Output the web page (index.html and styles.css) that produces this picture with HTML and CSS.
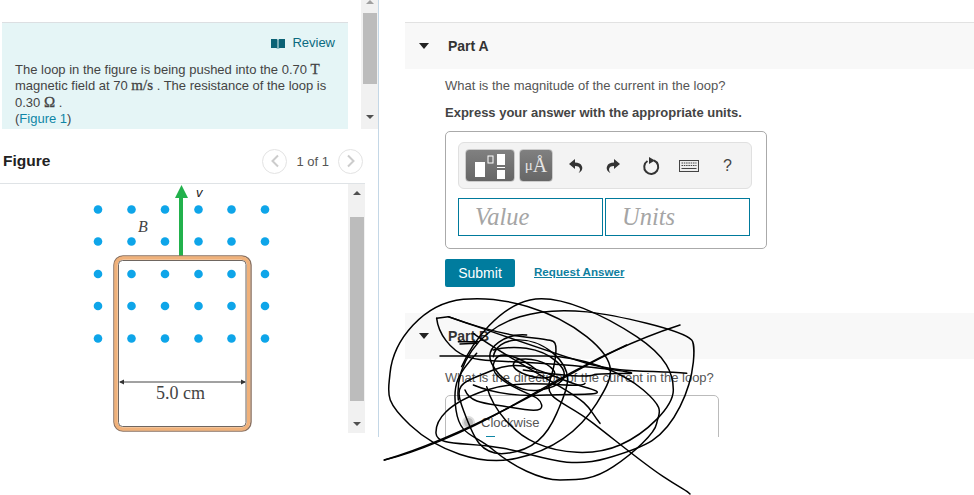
FILE: index.html
```html
<!DOCTYPE html>
<html lang="en">
<head>
<meta charset="UTF-8">
<meta name="viewport" content="width=device-width, initial-scale=1.0">
<title>Part A</title>
<link rel="stylesheet" href="styles.css">
</head>
<body>

<div class="left-pane">
    <div class="problem-row">
        <div class="problem">
            <div class="review">
                <svg class="review-icon" width="16" height="11" viewBox="0 0 16 11"><path d="M1 1h5.500q1 0 1 1v9q-.5-1-1.500-1H1zM15 1H9.500q-1 0-1 1v9q.5-1 1.500-1H15z" fill="#0b6275"/></svg>
                <a class="review-link">Review</a>
            </div>
            <p>The loop in the figure is being pushed into the 0.70 <span class="math">T</span><br>
            magnetic field at 70 <span class="math">m/s</span> . The resistance of the loop is<br>
            0.30 <span class="math">Ω</span> .<br>
            (<a class="fig-link">Figure 1</a>)</p>
        </div>
        <div class="scrollbar top-scroll">
            <span class="arrow-up"></span>
            <span class="thumb"></span>
            <span class="arrow-down"></span>
        </div>
    </div>

    <div class="figure-head">
        <h2>Figure</h2>
        <div class="pager">
            <span class="circle"><svg width="10" height="14" viewBox="0 0 10 14"><path d="M8 1.500 2.500 7 8 12.500" fill="none" stroke="#ccc" stroke-width="2"/></svg></span>
            <span class="count">1 of 1</span>
            <span class="circle"><svg width="10" height="14" viewBox="0 0 10 14"><path d="M2 1.500 7.500 7 2 12.500" fill="none" stroke="#ccc" stroke-width="2"/></svg></span>
        </div>
    </div>

    <div class="figure-body">
        <svg class="figure-art" width="348" height="249" viewBox="0 184 348 249">
            <g fill="#0ea5e9">
                <circle cx="98" cy="209.500" r="4.300"/><circle cx="131.500" cy="209.500" r="4.300"/><circle cx="165" cy="209.500" r="4.300"/><circle cx="198.500" cy="209.500" r="4.300"/><circle cx="231.500" cy="209.500" r="4.300"/><circle cx="265" cy="209.500" r="4.300"/>
                <circle cx="98" cy="241.500" r="4.300"/><circle cx="131.500" cy="241.500" r="4.300"/><circle cx="165" cy="241.500" r="4.300"/><circle cx="198.500" cy="241.500" r="4.300"/><circle cx="231.500" cy="241.500" r="4.300"/><circle cx="265" cy="241.500" r="4.300"/>
                <circle cx="98" cy="274" r="4.300"/><circle cx="131.500" cy="274" r="4.300"/><circle cx="165" cy="274" r="4.300"/><circle cx="198.500" cy="274" r="4.300"/><circle cx="231.500" cy="274" r="4.300"/><circle cx="265" cy="274" r="4.300"/>
                <circle cx="98" cy="306" r="4.300"/><circle cx="131.500" cy="306" r="4.300"/><circle cx="165" cy="306" r="4.300"/><circle cx="198.500" cy="306" r="4.300"/><circle cx="231.500" cy="306" r="4.300"/><circle cx="265" cy="306" r="4.300"/>
                <circle cx="98" cy="338.500" r="4.300"/><circle cx="131.500" cy="338.500" r="4.300"/><circle cx="165" cy="338.500" r="4.300"/><circle cx="198.500" cy="338.500" r="4.300"/><circle cx="231.500" cy="338.500" r="4.300"/><circle cx="265" cy="338.500" r="4.300"/>
            </g>
            <rect x="179" y="196" width="4" height="60" fill="#22b14c"/>
            <path d="M181.500 185 188 198H175z" fill="#22b14c"/>
            <rect x="114" y="256" width="137" height="175" rx="9" fill="none" stroke="#8a7262" stroke-width="1.500"/>
            <rect x="116" y="258" width="132.500" height="171" rx="7" fill="none" stroke="#f0b17a" stroke-width="3.500"/>
            <rect x="118.500" y="260.500" width="127.500" height="166" rx="4" fill="none" stroke="#6f6660" stroke-width="1"/>
            <path d="M120 382H245" stroke="#444" stroke-width="1"/>
            <path d="M124 379.500 119 382l5 2.500zM241 379.500l5 2.500-5 2.500z" fill="#333"/>
            <text class="fig-v" x="196" y="197">v</text>
            <text class="fig-b" x="138" y="232">B</text>
            <text class="fig-size" x="180.500" y="399">5.0 cm</text>
        </svg>
        <div class="scrollbar figure-scroll">
            <span class="arrow-up"></span>
            <span class="thumb"></span>
            <span class="arrow-down"></span>
        </div>
    </div>
</div>

<div class="right-pane">
    <div class="part-head part-a">
        <span class="caret"></span>
        <h3>Part A</h3>
    </div>
    <div class="part-body">
        <p class="question">What is the magnitude of the current in the loop?</p>
        <p class="instructions">Express your answer with the appropriate units.</p>

        <div class="answer-box">
            <div class="toolbar">
                <span class="tool-btn tool-wide">
                    <svg width="32" height="26" viewBox="0 0 32 26">
                        <rect x="1" y="9" width="10" height="15" fill="#fff"/>
                        <rect x="14" y="3" width="5" height="7" fill="none" stroke="#fff"/>
                        <rect x="23" y="1" width="8" height="11" fill="#fff"/>
                        <rect x="23" y="14" width="8" height="1" fill="#fff"/>
                        <rect x="23" y="17" width="8" height="9" fill="#fff"/>
                    </svg>
                </span>
                <span class="tool-btn tool-unit">μ<span class="angstrom">Å</span></span>
                <svg class="tool-icon" width="15" height="16" viewBox="0 0 15 16"><path d="M7 1 1 6l6 5V8c3 0 5 1 5 3.500 0 1-.5 2.500-1.500 3.500C13.500 13.500 15 11 14 8.500 13 5.500 10.500 4.500 7 4.500z" fill="#333"/></svg>
                <svg class="tool-icon redo" width="15" height="16" viewBox="0 0 15 16"><path d="M8 1l6 5-6 5V8C5 8 3 9 3 11.500 3 12.500 3.500 14 4.500 15 1.500 13.500 0 11 1 8.500 2 5.500 4.500 4.500 8 4.500z" fill="#333"/></svg>
                <svg class="tool-icon reset" width="18" height="20" viewBox="0 0 18 20"><path d="M5.500 5a7 7 0 1 0 6.500-.5" fill="none" stroke="#333" stroke-width="2"/><path d="M7 1l6 3.500L7 8z" fill="#333"/></svg>
                <svg class="tool-icon keyboard" width="20" height="12" viewBox="0 0 20 12"><rect x=".5" y=".5" width="19" height="11" fill="#eee" stroke="#444"/><path d="M2.500 3h15M2.500 5.500h15" stroke="#444" stroke-dasharray="1.500 .8"/><path d="M2.500 8.500h15" stroke="#444"/></svg>
                <span class="help">?</span>
            </div>
            <div class="inputs">
                <div class="fake-input">Value</div>
                <div class="fake-input">Units</div>
            </div>
        </div>

        <div class="actions">
            <button class="submit">Submit</button>
            <a class="request">Request Answer</a>
        </div>
    </div>

    <div class="part-head part-b">
        <span class="caret"></span>
        <h3>Part B</h3>
    </div>
    <div class="part-body">
        <p class="question part-b-question">What is the direction of the current in the loop?</p>
        <div class="choice-box">
            <span class="radio"></span>
            <span class="choice-label">Clockwise</span>
            <span class="choice-mark"></span>
        </div>
    </div>
</div>

<!-- pen scribble drawn over the page -->
<svg class="scribble" width="350" height="205" viewBox="0 0 1050 615">
    <g fill="none" stroke="#000" stroke-width="4.500" stroke-linecap="round" stroke-linejoin="round">
        <path d="M30 250C40 150 130 40 250 28S520 60 620 140S700 260 650 340S520 480 410 505S170 480 90 405S25 310 30 250"/>
        <path d="M235 330C225 230 290 120 420 80S700 75 800 100S925 140 935 150S950 250 900 350S800 470 680 505S480 495 370 475S170 470 168 430S200 340 320 300S600 300 615 280"/>
        <path d="M245 230C280 150 360 50 450 30S680 80 770 140S880 250 880 300S800 430 720 465S540 490 470 460S340 360 320 290"/>
        <path d="M180 198L500 198C600 200 720 240 790 300S835 370 830 400S760 490 700 530S600 570 540 570S400 530 340 480S240 440 228 360S235 250 290 190"/>
        <path d="M170 85L205 80C260 100 350 130 430 140S520 150 525 160S530 210 510 270S550 330 640 400S790 520 850 560S920 600 930 612"/>
        <path d="M170 85C175 130 210 180 260 200S450 210 660 235S670 245 640 255S500 250 430 240"/>
        <path d="M340 200C350 140 450 130 520 190S560 300 530 370S460 480 380 490S280 440 250 360S240 280 340 240S500 260 610 290S590 310 500 315S340 310 280 285"/>
        <path d="M205 80C350 130 520 190 620 220S820 240 920 250"/>
        <path d="M13 510C100 490 250 430 400 345S620 220 740 165"/>
        <path d="M13 510C150 470 300 400 450 320S700 170 900 105"/>
        <path d="M235 155L295 155M240 162L290 160"/>
        <path d="M470 240C420 200 360 180 345 210S345 260 400 290S480 320 485 345S440 360 380 350S270 340 255 300"/>
        <path d="M340 180C400 165 480 170 530 215S540 290 480 300S360 270 335 220S380 130 440 135"/>
        <path d="M410 210C450 200 500 215 520 240S480 270 440 255S390 225 410 210"/>
        <path d="M280 130C340 175 440 230 540 290S620 350 660 400"/>
    </g>
</svg>

</body>
</html>
```

FILE: styles.css
```css
body {
    font-family: "Liberation Sans", Arial, sans-serif;
    background-color: #fff;
    color: #444;
    margin: 0;
    padding: 0;
    width: 974px;
    height: 495px;
    overflow: hidden;
    display: flex;
    align-items: flex-start;
    position: relative;
}

p, h2, h3 {
    margin: 0;
}

/* left column */
.left-pane {
    width: 378px;
    height: 437px;
    flex-shrink: 0;
    border-right: 1px solid #c4d7e6;
}

.problem-row {
    display: flex;
    align-items: flex-end;
    height: 129px;
}

.problem {
    width: 346px;
    height: 106px;
    margin-left: 2px;
    margin-right: 13px;
    background-color: #e5f5f6;
    border-top: 1px solid #dcdfe2;
    font-size: 13px;
    line-height: 16.400px;
    overflow: hidden;
}

.problem p {
    padding-left: 13px;
    margin-top: 11px;
    white-space: nowrap;
}

.review {
    display: flex;
    justify-content: flex-end;
    align-items: center;
    gap: 6px;
    padding: 12px 13px 0 0;
    height: 16px;
}

.review-link {
    color: #0b6a80;
}

.math {
    font-family: "Liberation Serif", serif;
    font-size: 15px;
    line-height: 0;
    -webkit-text-stroke: 0.3px #444;
    color: #444;
}

.fig-link {
    color: #0f86a6;
}

.scrollbar {
    width: 17px;
    background-color: #f1f1f1;
    display: flex;
    flex-direction: column;
    align-items: center;
    flex-shrink: 0;
}

.top-scroll {
    height: 129px;
}

.figure-scroll {
    height: 249px;
}

.thumb {
    display: block;
    width: 14px;
    background-color: #bcbcbc;
}

.top-scroll .thumb {
    height: 71px;
    margin-top: 9px;
}

.figure-scroll .thumb {
    height: 184px;
    margin-top: 22px;
}

.arrow-up, .arrow-down {
    display: block;
    width: 0;
    height: 0;
    border-left: 4px solid transparent;
    border-right: 4px solid transparent;
}

.arrow-up {
    border-bottom: 4px solid #505050;
    margin-top: 7px;
}

.top-scroll .arrow-up {
    margin-top: 0;
    border-bottom-color: #a0a0a0;
}

.arrow-down {
    border-top: 4px solid #505050;
    margin-top: 21px;
}

.top-scroll .arrow-down {
    margin-top: 31px;
}

.figure-head {
    width: 365px;
    height: 55px;
    box-sizing: border-box;
    border-bottom: 1px solid #dfe3e6;
    display: flex;
    align-items: center;
    justify-content: space-between;
    padding: 10px 2px 0 3px;
}

.figure-head h2 {
    font-size: 15.500px;
    color: #222;
}

.pager {
    display: flex;
    align-items: center;
    gap: 9px;
}

.circle {
    width: 23px;
    height: 23px;
    border: 1px solid #e3e3e3;
    border-radius: 50%;
    display: flex;
    align-items: center;
    justify-content: center;
}

.count {
    font-size: 13px;
    color: #555;
}

.figure-body {
    display: flex;
    width: 365px;
}

.figure-art {
    display: block;
    flex-shrink: 0;
}

.fig-v {
    font-family: "Liberation Sans", sans-serif;
    font-style: italic;
    font-size: 13px;
    fill: #222;
}

.fig-b {
    font-family: "Liberation Serif", serif;
    font-style: italic;
    font-size: 16px;
    fill: #444;
}

.fig-size {
    font-family: "Liberation Serif", serif;
    font-size: 18px;
    fill: #444;
    text-anchor: middle;
}

/* right column */
.right-pane {
    flex: 1;
    height: 437px;
    padding: 22px 0 0 26px;
    box-sizing: border-box;
    overflow: hidden;
}

.part-head {
    height: 46px;
    background-color: #f8f8f8;
    display: flex;
    align-items: center;
    padding-left: 14px;
}

.part-a {
    border-top: 1px solid #e2e2e2;
}

.part-head h3 {
    font-size: 14px;
    font-weight: bold;
    color: #333;
    margin-left: 19px;
}

.caret {
    width: 0;
    height: 0;
    border-left: 5px solid transparent;
    border-right: 5px solid transparent;
    border-top: 6px solid #222;
}

.part-body {
    padding-left: 40px;
}

.question {
    font-size: 13px;
    line-height: 16px;
    padding-top: 9px;
    color: #555;
}

.part-b-question {
    padding-top: 11px;
}

.instructions {
    font-size: 13px;
    font-weight: bold;
    line-height: 16px;
    margin-top: 11px;
    color: #444;
}

.answer-box {
    width: 322px;
    height: 118px;
    box-sizing: border-box;
    margin-top: 10px;
    border: 1px solid #aaa;
    border-radius: 5px;
    padding: 10px 12px 0 12px;
}

.toolbar {
    height: 47px;
    width: 294px;
    box-sizing: border-box;
    background-color: #f3f3f3;
    border: 1px solid #e0e0e0;
    border-radius: 6px;
    display: flex;
    align-items: center;
    padding-left: 6px;
}

.tool-btn {
    height: 33px;
    box-sizing: border-box;
    background: linear-gradient(#808080, #666);
    border: 1px solid #ccc;
    border-radius: 4px;
    display: flex;
    align-items: center;
    justify-content: center;
}

.tool-wide {
    width: 50px;
    margin-right: 4px;
}

.tool-unit {
    width: 34px;
    font-family: "Liberation Serif", serif;
    font-size: 15px;
    color: #e6e6e6;
}

.angstrom {
    font-size: 20px;
}

.tool-icon {
    margin-left: 15px;
}

.redo {
    margin-left: 23px;
}

.reset {
    margin-left: 21px;
}

.keyboard {
    margin-left: 19px;
}

.help {
    margin-left: 24px;
    font-size: 16px;
    color: #444;
}

.inputs {
    display: flex;
    gap: 2px;
    margin-top: 9px;
}

.fake-input {
    width: 145px;
    height: 38px;
    box-sizing: border-box;
    border: 1px solid #007a9c;
    padding-left: 16px;
    font-family: "Liberation Serif", serif;
    font-style: italic;
    font-size: 24.500px;
    line-height: 36px;
    color: #a5a5a5;
}

.actions {
    display: flex;
    align-items: center;
    margin-top: 10px;
    margin-bottom: 26px;
}

.submit {
    width: 70px;
    height: 28px;
    border: none;
    border-radius: 2px;
    background-color: #007c9e;
    color: #fff;
    font-family: "Liberation Sans", Arial, sans-serif;
    font-size: 14px;
    padding: 0;
}

.request {
    margin-left: 19px;
    padding-bottom: 3px;
    font-size: 11.600px;
    font-weight: bold;
    color: #0f7f9f;
    text-decoration: underline;
}

.choice-box {
    width: 274px;
    height: 60px;
    box-sizing: border-box;
    margin-top: 9px;
    border: 1px solid #bbb;
    border-radius: 5px;
    display: flex;
    align-items: center;
    padding: 0 0 6px 16px;
    position: relative;
}

.radio {
    width: 9px;
    height: 9px;
    border-radius: 50%;
    background-color: #bbb;
    border: 2px solid #ddd;
}

.choice-label {
    margin-left: 6px;
    font-size: 13px;
    color: #555;
}

/* cut off by the end of the pane */
.choice-mark {
    position: absolute;
    left: 40px;
    top: 40px;
    width: 9px;
    height: 1px;
    background-color: #0f86a6;
}

.scribble {
    position: absolute;
    left: 380px;
    top: 290px;
    pointer-events: none;
}
```
